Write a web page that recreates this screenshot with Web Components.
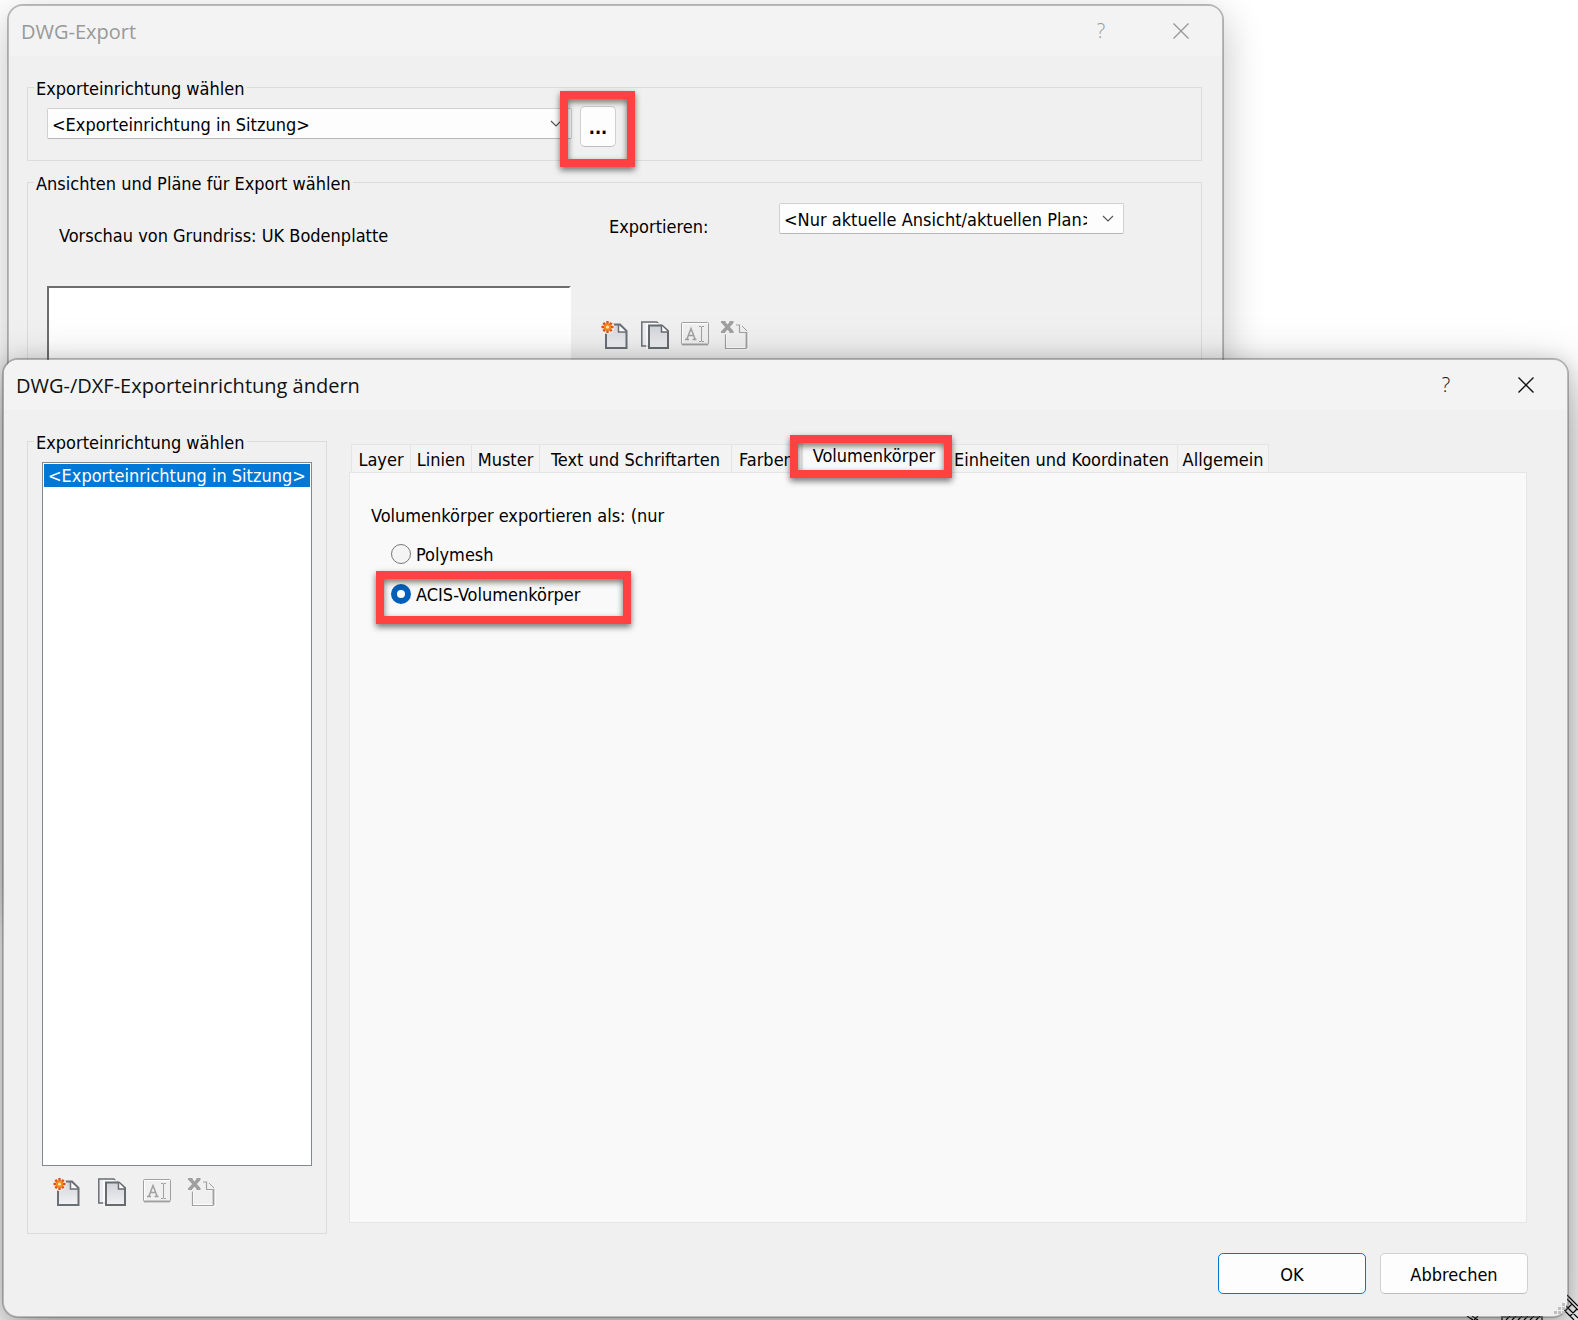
<!DOCTYPE html>
<html lang="de">
<head>
<meta charset="utf-8">
<title>DWG-Export</title>
<style>
  html, body { height: 100%; }
  body { margin: 0; background: #fff; overflow: hidden; font: 18px/24px "DejaVu Sans Condensed", "DejaVu Sans", sans-serif; font-stretch: condensed; color: #000; }
</style>
</head>
<body>
<export-desktop></export-desktop>
<script>
const define = (name, html, setup) => {
  const template = document.createElement('template');
  template.innerHTML = '<style>*{box-sizing:border-box}button,select,input{font:inherit;color:inherit;margin:0}svg{display:block}</style>' + html;
  customElements.define(name, class extends HTMLElement {
    connectedCallback() {
      if (this.shadowRoot) return;
      this.attachShadow({ mode: 'open' }).append(template.content.cloneNode(true));
      if (setup) setup(this, this.shadowRoot);
    }
  });
};

/* Dialog frame with caption bar */
define('dialog-window', `
<style>
  :host { display: flex; flex-direction: column; box-sizing: border-box; border: 2px solid rgba(90,90,90,.42); background-clip: padding-box; background-color: #f0f0f0; border-radius: 16px; }
  header { display: flex; align-items: center; flex: none; height: 50px; padding: 0 1px 0 12px; background: #f3f3f3; border-radius: 14px 14px 0 0; font: 20px/28px "Open Sans", sans-serif; color: #111; }
  :host([inactive]) header { color: #999; }
  h1 { flex: 1; margin: 0; padding-top: 2px; font: inherit; }
  button { display: flex; align-items: center; justify-content: center; width: 80px; height: 50px; padding: 0; border: 0; background: none; }
  .help { font-weight: 300; }
  main { flex: 1; display: flex; flex-direction: column; min-height: 0; }
</style>
<header><h1></h1><button class="help" aria-label="Hilfe">?</button><button aria-label="Schließen"><svg width="16" height="16" viewBox="0 0 16 16" fill="none" stroke="currentColor" stroke-width="1.4"><path d="M.5.5l15 15M15.5.5l-15 15"/></svg></button></header>
<main><slot></slot></main>`, (el, root) => { root.querySelector('h1').textContent = el.getAttribute('caption'); });

/* Titled group */
define('group-box', `
<style>
  :host { display: flex; flex-direction: column; }
  fieldset { flex: 1; display: flex; flex-direction: column; min-width: 0; min-height: 0; margin: 0; padding: 0; border: 1px solid #dcdcdc; }
  legend { margin-left: 6px; padding: 4px 2px 0; line-height: 20px; }
  .body { flex: 1; display: flex; flex-direction: column; min-height: 0; height: 100%; }
</style>
<fieldset><legend></legend><div class="body"><slot></slot></div></fieldset>`, (el, root) => { root.querySelector('legend').textContent = el.getAttribute('caption'); });

/* Drop-down list */
define('drop-down', `
<style>
  :host { display: grid; height: 31px; }
  select, svg { grid-area: 1 / 1; }
  select { appearance: none; width: 100%; height: 31px; padding: 2px 36px 0 4px; border: 1px solid #d0d0d0; border-bottom-color: #b8b8b8; border-radius: 2px; background: #fdfdfd; overflow: hidden; text-overflow: clip; white-space: nowrap; }
  svg { align-self: center; justify-self: end; margin-right: 10px; pointer-events: none; }
</style>
<select></select>
<svg width="12" height="8" viewBox="0 0 12 8" fill="none" stroke="#555" stroke-width="1.2"><path d="M1 1l5 5 5-5"/></svg>`, (el, root) => {
  const select = root.querySelector('select');
  select.setAttribute('aria-label', el.getAttribute('label'));
  select.add(new Option(el.getAttribute('value')));
});

/* Push button */
define('push-button', `
<style>
  :host { display: block; width: 148px; height: 41px; }
  :host([small]) { width: 36px; }
  button { width: 100%; height: 100%; padding: 2px 0 0; border: 1px solid #d0d0d0; border-bottom-color: #bcbcbc; border-radius: 5px; background: #fdfdfd; }
  :host([small]) button { font-weight: bold; }
  :host([default]) button { border-color: #0078d4; }
</style>
<button><slot></slot></button>`);

/* Red marker round its content */
define('marker-frame', `
<style>
  :host { display: block; position: relative; }
  i { position: absolute; z-index: 2; inset: var(--reach, 0); border: 8px solid #fe4242; filter: drop-shadow(0 3px 3px rgba(0,0,0,.55)); pointer-events: none; }
</style>
<slot></slot><i></i>`);

/* New / duplicate / rename / delete */
define('setup-tools', `
<style>
  :host { display: flex; gap: var(--tool-gap, 12px); }
  button { width: 28px; height: 29px; padding: 0; border: 0; background: none; }
</style>
<button aria-label="Neu"><svg width="28" height="29" viewBox="0 0 28 29">
  <defs><linearGradient id="g" x1="0" y1="0" x2="0" y2="1"><stop offset="0" stop-color="#d0d3d9"/><stop offset="1" stop-color="#f2f3f6"/></linearGradient></defs>
  <path d="M5 5v22h20.500V10L19 3.500H10z" fill="url(#g)" stroke="#6a6f75" stroke-width="2"/>
  <path d="M17.500 4v7H25" fill="#fff" stroke="#6a6f75" stroke-width="1.500"/>
  <circle cx="6.500" cy="6" r="7" fill="#f5efec"/>
  <path d="M6.500 0v12M.5 6h12M2.300 1.800l8.400 8.400M10.700 1.800l-8.400 8.400" stroke="#dd5218" stroke-width="2.400"/>
  <circle cx="6.500" cy="6" r="3.600" fill="#f58a1b"/><circle cx="6.500" cy="6" r="1.600" fill="#fff0b0"/></svg></button>
<button aria-label="Duplizieren"><svg width="28" height="29" viewBox="0 0 28 29">
  <path d="M.8 1h15l5 5v19H.8z" fill="#eceef1" stroke="#6a6f75" stroke-width="1.500"/>
  <path d="M6 28V3h13" fill="none" stroke="#fff" stroke-width="1.500"/>
  <path d="M8 4.500V27h19V10l-6-5.500z" fill="url(#g2)" stroke="#666b70" stroke-width="2"/>
  <defs><linearGradient id="g2" x1="0" y1="0" x2="0" y2="1"><stop offset="0" stop-color="#cfd2d7"/><stop offset="1" stop-color="#f0f1f5"/></linearGradient></defs>
  <path d="M20.500 4.500v6.500H27" fill="#fff" stroke="#666b70" stroke-width="1.500"/></svg></button>
<button aria-label="Umbenennen" disabled><svg width="28" height="29" viewBox="0 0 28 29">
  <g fill="none" stroke="#fff" transform="translate(1 1)"><rect x=".5" y="1.500" width="26" height="22" rx="1"/></g>
  <g fill="none" stroke="#a0a0a0"><rect x=".5" y="1.500" width="27" height="22" rx="1"/><path d="M1 23.500h26" stroke-width="2"/><path d="M18 5.500h2l.5 1 .5-1h2M20.500 6v14M18 20.500h2l.5-1 .5 1h2"/></g>
  <path d="M4 18.500h4M11.500 18.500h4M6 18l4-10.500 4 10.500M7.500 14.500h5" fill="none" stroke="#a0a0a0" stroke-width="1.500"/></svg></button>
<button aria-label="Löschen" disabled><svg width="28" height="29" viewBox="0 0 28 29" fill="none">
  <path d="M5.500 14v12.500h19M27 12v17H5" stroke="#fff"/>
  <g stroke="#a0a0a0"><path d="M2 1l9 10M11 1l-9 10" stroke-width="3.400"/><path d="M0 1h4.500M8.500 1h4M0 11h4M8.500 11h4" stroke-width="2"/><path d="M4.500 13.500v14h20.500M15 4h3.500v7M18 11.500h7.500M21 5.500h1M22 6.500h1M23 7.500h1M24 8.500h1M25 9.500h1" stroke-width="1.200"/><path d="M25.500 11v16.500" stroke-width="1.800"/></g></svg></button>`);

/* Tab strip with page */
define('tab-pages', `
<style>
  :host { display: flex; flex-direction: column; }
  nav { display: flex; align-items: flex-end; height: 28px; padding-left: 2px; }
  button { width: var(--tab); white-space: nowrap; }
  nav > button { flex: none; height: 28px; padding: 2px 0 0; border: 1px solid #e5e5e5; border-width: 1px 1px 0 0; background: #f3f3f3; }
  nav > button:first-child { border-left-width: 1px; }
  marker-frame { z-index: 1; --reach: -6px -6px -6px -12px; }
  marker-frame button { display: block; height: 31px; padding: 0 0 2px; border: 1px solid #e5e5e5; border-bottom: 0; background: #f9f9f9; }
  section { flex: 1; border: 1px solid #e5e5e5; background: #f9f9f9; padding: 31px 21px; }
</style>
<nav role="tablist">
  <button role="tab" style="--tab:60px">Layer</button><button role="tab" style="--tab:61px">Linien</button><button role="tab" style="--tab:68px">Muster</button><button role="tab" style="--tab:192px">Text und Schriftarten</button><button role="tab" style="--tab:70px">Farben</button><marker-frame><button role="tab" style="--tab:144px" aria-selected="true">Volumenkörper</button></marker-frame><button role="tab" style="--tab:232px">Einheiten und Koordinaten</button><button role="tab" style="--tab:91px">Allgemein</button>
</nav>
<section role="tabpanel"><slot></slot></section>`);

/* Choice between solids export modes */
define('solids-choice', `
<style>
  :host { display: flex; flex-direction: column; align-items: flex-start; }
  p { margin: 0 0 15px; }
  label { display: flex; align-items: center; gap: 5px; height: 24px; }
  .choice { margin: 0 0 16px 20px; }
  marker-frame { --reach: -12px -51px -17px -15px; }
  input { appearance: none; width: 20px; height: 20px; margin-bottom: 2px; border: 1px solid #777; border-radius: 50%; background: #f4f4f4; }
  input:checked { border: 6px solid #005fb8; background: #fff; }
</style>
<p>Volumenkörper exportieren als: (nur</p>
<label class="choice"><input type="radio" name="solids">Polymesh</label>
<marker-frame class="choice"><label><input type="radio" name="solids" checked>ACIS-Volumenkörper</label></marker-frame>`);

define('export-dialog', `
<style>
  :host { display: flex; flex-direction: column; gap: 9px; padding: 19px 20px 20px 18px; flex: 1; }
  .setup { display: flex; align-items: flex-start; gap: 8px; padding: 7px 19px 13px; }
  .setup drop-down { width: 525px; margin-top: 2px; }
  marker-frame { --reach: -15px -19px -20px -20px; }
  .views { flex: 1; }
  .columns { flex: 1; display: flex; gap: 30px; padding: 9px 19px; }
  .left { width: 524px; display: flex; flex-direction: column; padding-top: 21px; }
  .left span { padding-left: 12px; }
  .preview { flex: 1; margin-top: 38px; min-height: 200px; border: 2px solid; border-color: #6d6d6d #fff #fff #6d6d6d; background: #fff; }
  .range { display: flex; align-items: flex-start; }
  .range label { width: 178px; padding: 12px 0 0 8px; }
  .range drop-down { width: 345px; }
  .right { display: flex; flex-direction: column; gap: 82px; }
</style>
<group-box caption="Exporteinrichtung wählen"><div class="setup">
  <drop-down label="Exporteinrichtung" value="&lt;Exporteinrichtung in Sitzung&gt;"></drop-down>
  <marker-frame><push-button small>...</push-button></marker-frame></div></group-box>
<group-box class="views" caption="Ansichten und Pläne für Export wählen"><div class="columns">
  <div class="left"><span>Vorschau von Grundriss: UK Bodenplatte</span><div class="preview"></div></div>
  <div class="right"><div class="range"><label>Exportieren:</label><drop-down label="Exportieren" value="&lt;Nur aktuelle Ansicht/aktuellen Plan&gt;"></drop-down></div><setup-tools></setup-tools></div>
</div></group-box>`, (el, root) => {
  const select = root.querySelector('.range drop-down');
  root.querySelector('label').addEventListener('click', () => select.shadowRoot.querySelector('select').focus());
});

define('setup-dialog', `
<style>
  :host { display: flex; flex-direction: column; flex: 1; gap: 19px; padding: 19px 39px 22px 23px; }
  .content { flex: 1; display: flex; gap: 22px; min-height: 0; }
  group-box { width: 300px; flex: none; }
  .setups { flex: 1; display: flex; flex-direction: column; gap: 12px; padding: 9px 14px 26px 14px; }
  select { flex: 1; width: 100%; padding: 1px; border: 1px solid #828790; border-radius: 0; background: #fff; overflow: hidden; outline: 0; }
  option { height: 23px; min-height: 23px; line-height: 22px; padding: 1px 0 0 4px; overflow: hidden; white-space: nowrap; }
  option:checked { background: #0078d7 linear-gradient(#0078d7, #0078d7); color: #fff; }
  setup-tools { --tool-gap: 17px; padding-left: 11px; }
  tab-pages { flex: 1; margin: 15px 1px 11px 0; }
  footer { display: flex; justify-content: flex-end; gap: 14px; }
  .grip { position: absolute; right: 2px; bottom: 2px; }
</style>
<div class="content">
  <group-box caption="Exporteinrichtung wählen"><div class="setups"><select size="4" aria-label="Exporteinrichtungen"><option selected>&lt;Exporteinrichtung in Sitzung&gt;</option></select><setup-tools></setup-tools></div></group-box>
  <tab-pages><solids-choice></solids-choice></tab-pages>
</div>
<footer><push-button default>OK</push-button><push-button>Abbrechen</push-button></footer>
<svg class="grip" width="11" height="11" fill="#bfbfbf"><path d="M8 0h3v3H8zM4 4h3v3H4zM8 4h3v3H8zM0 8h3v3H0zM4 8h3v3H4zM8 8h3v3H8z"/></svg>`);

define('export-desktop', `
<style>
  :host { display: block; position: relative; height: 100%; min-height: 900px; overflow: hidden; }
  dialog-window { position: absolute; }
  .back { left: 7px; right: 354px; top: 4px; height: 900px; box-shadow: 0 12px 40px rgba(0,0,0,.24); }
  .front { left: 2px; right: 9px; top: 358px; bottom: 2px; box-shadow: 0 20px 54px rgba(0,0,0,.36), 0 2px 20px rgba(0,0,0,.14); }
  .drawing { position: absolute; right: 0; bottom: 0; }
</style>
<svg class="drawing" width="128" height="50" fill="none" stroke="#000" stroke-width="1.200"><path d="M17 46l6 4M22 46l6 4M28 46l-4 4M52 46v4M92 46v4M53 47h38M56 50l4-4M62 50l4-4M68 50l4-4M74 50l4-4M80 50l4-4M86 50l4-4M117 25l11 11M117 29l11 11M114 34l14 14M113 39l11 11M122 34l-7 7M127 39l-7 7"/></svg>
<dialog-window class="back" caption="DWG-Export" inactive><export-dialog></export-dialog></dialog-window>
<dialog-window class="front" caption="DWG-/DXF-Exporteinrichtung ändern"><setup-dialog></setup-dialog></dialog-window>`);
</script>
</body>
</html>
